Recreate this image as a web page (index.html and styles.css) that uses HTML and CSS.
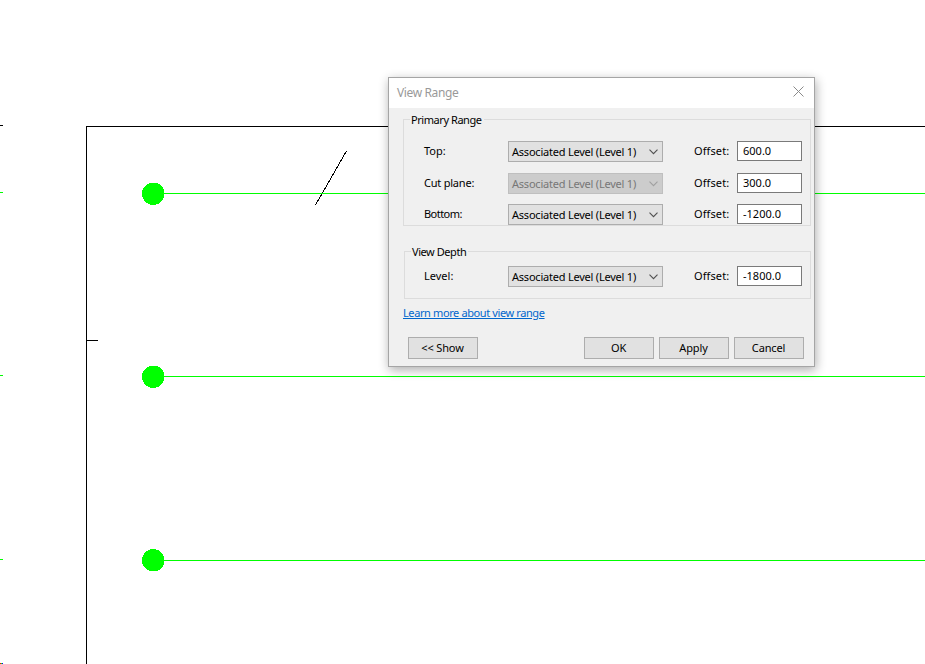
FILE: index.html
```html
<!DOCTYPE html>
<html lang="en">
<head>
	<meta charset="utf-8">
	<title>View Range</title>
	<link rel="stylesheet" href="styles.css">
</head>
<body>
	<!-- plan drawing -->
	<svg class="drawing" width="925" height="664" viewBox="0 0 925 664" shape-rendering="crispEdges">
		<g fill="none" stroke="#000">
			<path d="M86.5 664V126.5H925"/>
			<path d="M87 340.5H98"/>
			<path d="M0 125.5H3"/>
			<path d="M346.5 151L315.5 205"/>
		</g>
		<g fill="none" stroke="#0f0">
			<path d="M153 193.5H925"/>
			<path d="M153 376.5H925"/>
			<path d="M153 560.5H925"/>
			<path d="M0 192.5H3M0 375.5H3M0 559.5H3"/>
		</g>
		<g fill="#0f0">
			<circle cx="153.2" cy="193.7" r="11.2"/>
			<circle cx="153.2" cy="376.7" r="11.2"/>
			<circle cx="153.2" cy="560.3" r="11.2"/>
		</g>
		<path d="M0 663.5H1" stroke="#f00"/>
		<path d="M1 663.5H2" stroke="#0f0"/>
		<path d="M2 663.5H3" stroke="#00f"/>
	</svg>

	<div class="dialog">
		<header class="titlebar">
			<span class="title">View Range</span>
			<svg class="close" width="11" height="11" viewBox="0 0 11 11"><path d="M.5 .5L10.5 10.5M10.5 .5L.5 10.5"/></svg>
		</header>
		<form class="content">
			<section class="group primary">
				<span class="legend">Primary Range</span>
				<div class="row">
					<span class="label">Top:</span>
					<button type="button" class="combo"><span>Associated Level (Level 1)</span><svg width="9" height="6" viewBox="0 0 9 6"><path d="M.5 .7L4.5 4.7L8.5 .7"/></svg></button>
					<span class="label offset">Offset:</span>
					<input type="text" value="600.0">
				</div>
				<div class="row">
					<span class="label cut">Cut plane:</span>
					<button type="button" class="combo" disabled><span>Associated Level (Level 1)</span><svg width="9" height="6" viewBox="0 0 9 6"><path d="M.5 .7L4.5 4.7L8.5 .7"/></svg></button>
					<span class="label offset">Offset:</span>
					<input type="text" value="300.0">
				</div>
				<div class="row">
					<span class="label bottom">Bottom:</span>
					<button type="button" class="combo"><span>Associated Level (Level 1)</span><svg width="9" height="6" viewBox="0 0 9 6"><path d="M.5 .7L4.5 4.7L8.5 .7"/></svg></button>
					<span class="label offset">Offset:</span>
					<input type="text" value="-1200.0">
				</div>
			</section>
			<section class="group depth">
				<span class="legend">View Depth</span>
				<div class="row">
					<span class="label">Level:</span>
					<button type="button" class="combo"><span>Associated Level (Level 1)</span><svg width="9" height="6" viewBox="0 0 9 6"><path d="M.5 .7L4.5 4.7L8.5 .7"/></svg></button>
					<span class="label offset">Offset:</span>
					<input type="text" value="-1800.0">
				</div>
			</section>
			<a class="more" href="#">Learn more about view range</a>
			<footer class="buttons">
				<button type="button" class="btn show">&lt;&lt; Show</button>
				<button type="button" class="btn">OK</button>
				<button type="button" class="btn">Apply</button>
				<button type="button" class="btn">Cancel</button>
			</footer>
		</form>
	</div>
</body>
</html>
```
FILE: styles.css
```css
* {
	box-sizing: border-box;
}

body {
	margin: 0;
	width: 925px;
	height: 664px;
	position: relative;
	overflow: hidden;
	background: #fff;
	font-family: "Noto Sans", "Open Sans", sans-serif;
	font-size: 11px;
	line-height: 14px;
	color: #000;
}

.drawing {
	display: block;
}

.dialog {
	position: absolute;
	left: 388px;
	top: 77px;
	width: 427px;
	height: 290px;
	border: 1px solid #a5a5a5;
	background: #f0f0f0;
	box-shadow: 1px 3px 10px rgba(0, 0, 0, 0.32);
}

.titlebar {
	display: flex;
	justify-content: space-between;
	align-items: center;
	height: 30px;
	padding: 0 10px 1px 8px;
	background: #fff;
}

.title {
	padding-top: 1px;
	font-size: 12px;
	letter-spacing: -0.38px;
	color: #999;
}

.close {
	margin-bottom: 2px;
}

.close path {
	fill: none;
	stroke: #8a8a8a;
}

.content {
	display: flex;
	flex-direction: column;
	padding: 11px 3px 0 14px;
}

.group {
	display: flex;
	flex-direction: column;
	border: 1px solid #dcdcdc;
}

.primary {
	height: 107px;
}

.depth {
	height: 48px;
	margin: 25px 0 0 1px;
}

.legend {
	align-self: flex-start;
	height: 14px;
	margin: -7px 0 0 6px;
	padding: 0 2px 0 1px;
	background: #f0f0f0;
	letter-spacing: -0.44px;
	white-space: nowrap;
}

.row {
	display: grid;
	grid-template-columns: 84px 155px 31px 43px 65px;
	height: 21px;
	margin: 14px 0 0 20px;
}

.row + .row {
	margin-top: 11px;
}

.row + .row + .row {
	margin-top: 10px;
}

.depth .row {
	margin: 7px 0 0 19px;
}

.label {
	line-height: 20px;
	white-space: nowrap;
}

.cut {
	letter-spacing: -0.22px;
}

.bottom {
	letter-spacing: -0.55px;
}

.offset {
	grid-column: 4;
	letter-spacing: 0.1px;
}

.combo {
	display: flex;
	justify-content: space-between;
	align-items: center;
	height: 21px;
	padding: 1px 4px 0 3px;
	border: 1px solid #adadad;
	border-radius: 0;
	background: #e1e1e1;
	font: inherit;
	letter-spacing: -0.22px;
	color: #000;
	white-space: nowrap;
}

.combo path {
	fill: none;
	stroke: #505050;
	stroke-width: 1.1;
}

.combo:disabled {
	border-color: #bfbfbf;
	background: #ccc;
	color: #777;
}

.combo:disabled path {
	stroke: #a0a0a0;
}

.row input {
	width: 65px;
	height: 20px;
	padding: 0 5px 2px;
	border: 1px solid #7a7a7a;
	border-radius: 0;
	background: #fff;
	font: inherit;
	color: #000;
}

.more {
	align-self: flex-start;
	margin: 7px 0 0;
	color: #0066cc;
	letter-spacing: -0.39px;
	text-decoration: underline;
}

.buttons {
	display: flex;
	gap: 5px;
	margin: 17px 0 0 5px;
}

.btn {
	width: 70px;
	height: 22px;
	padding: 0 1px 0 0;
	border: 1px solid #adadad;
	border-radius: 0;
	background: #e1e1e1;
	font: inherit;
	letter-spacing: -0.15px;
	color: #000;
}

.show {
	margin-right: 101px;
}
```
